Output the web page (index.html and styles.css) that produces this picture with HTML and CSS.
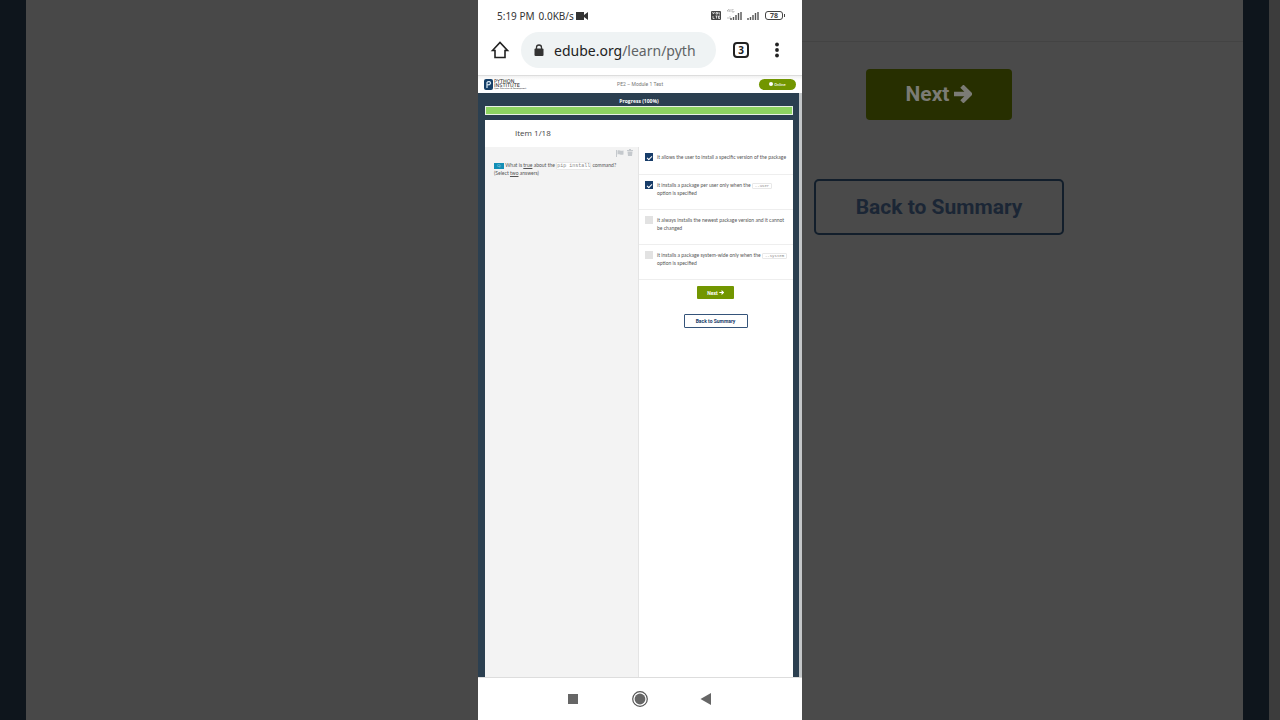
FILE: index.html
```
<!DOCTYPE html>
<html lang="en">
<head>
<meta charset="utf-8">
<title>PE2 – Module 1 Test</title>
<link rel="stylesheet" href="styles.css">
</head>
<body>
<div class="stage">
  <div class="side side-left" aria-hidden="true"></div>

  <main class="phone">
    <div class="status">
      <span>5:19 PM</span>
      <span class="speed">0.0KB/s</span>
      <svg class="cam" viewBox="0 0 12 8" width="12" height="8"><path fill="#333" d="M0 0h8v3l4-3v8l-4-3v3H0z"/></svg>
      <svg class="signals" viewBox="0 0 76 14" width="76" height="14">
        <rect x="0" y="2" width="10" height="9" rx="1" fill="#444"/>
        <path d="M1.500 3l1 2 1-2M5 3.500h1.500V5H5zM8 3v2h1M2 7v2.500h1.500M4.500 7h2M5.500 7v2.500M9 7H7.500v2.500H9M7.500 8H9" fill="none" stroke="#fff" stroke-width=".7"/>
        <path d="M18 0l-2 2h3M19 0v3M23 0h-2v3h2V2M17 8v2M19 7v3" fill="none" stroke="#999" stroke-width=".6"/>
        <path d="M20 9v2M22.500 8v3M25 6v5M27.500 4v7M30 3v8" stroke="#555" stroke-width="1.400"/>
        <path d="M37 9v2M39.500 8v3M42 6v5M44.500 4v7M47 3v8" stroke="#555" stroke-width="1.400"/>
        <rect x="54.500" y="2.500" width="17" height="8" rx="2.500" fill="none" stroke="#444"/>
        <path d="M73.500 5v3" stroke="#444"/>
        <text x="63" y="9" text-anchor="middle" class="battery">78</text>
      </svg>
    </div>

    <div class="browser">
      <button class="icon" aria-label="Home"><svg viewBox="0 0 20 20" width="20" height="20"><path d="M2.500 10.500L10 2.500l7.500 8H15V17.500H5v-7z" fill="none" stroke="#222" stroke-width="1.600"/></svg></button>
      <div class="url">
        <svg viewBox="0 0 10 12" width="10" height="12"><path d="M2.500 5V3.500a2.500 2.500 0 015 0V5" fill="none" stroke="#333" stroke-width="1.300"/><rect x=".5" y="4.500" width="9" height="7.500" rx="1" fill="#333"/></svg>
        <span>edube.org<span class="path">/learn/pyth</span></span>
      </div>
      <button class="tabs" aria-label="Open tabs">3</button>
      <button class="icon" aria-label="Menu"><svg viewBox="0 0 20 20" width="20" height="20" fill="#222"><circle cx="10" cy="4.500" r="1.900"/><circle cx="10" cy="10" r="1.900"/><circle cx="10" cy="15.500" r="1.900"/></svg></button>
    </div>

    <header class="site">
      <div class="brand">
        <svg viewBox="0 0 9 11" width="9" height="11"><rect width="9" height="11" rx="2" fill="#153f68"/><path d="M3 9V3.500C4 2 7 2.500 6.500 4.500 6 6 4.500 6 3 6" fill="none" stroke="#d8e8f4" stroke-width="1.200"/></svg>
        <div class="brand-text"><span>PYTHON</span><span>INSTITUTE</span><small>Open Education &amp; Development</small></div>
      </div>
      <span class="course">PE2 – Module 1 Test</span>
      <span class="online"><i class="dot"></i>Online</span>
    </header>

    <div class="page">
      <div class="progress-label" id="progress">Progress (100%)</div>
      <div class="progress" role="progressbar" aria-labelledby="progress" aria-valuenow="100"><div class="bar" style="width:100%"></div></div>
      <section class="card">
        <h1>Item 1/18</h1>
        <div class="columns">
          <div class="question">
            <div class="tools">
              <svg viewBox="0 0 8 8" width="8" height="8" fill="#c5c9cd"><path d="M0 1h1v7H0zM1.500 1.500C3 .5 4.500 2.500 7.500 1.500v4C4.500 6.500 3 4.500 1.500 5.500z"/></svg>
              <svg viewBox="0 0 8 8" width="8" height="8" fill="#c5c9cd"><path d="M1 1h2V0h2v1h2v1H1zM1.500 2.500h5L6 7H2z"/></svg>
            </div>
            <p><span class="q">Q:</span> What is <u>true</u> about the <code>pip install</code> command?<br>(Select <u>two</u> answers)</p>
          </div>
          <form class="answers">
            <label><input type="checkbox" checked><span>it allows the user to install a specific version of the package</span></label>
            <label class="tall"><input type="checkbox" checked><span>it installs a package per user only when the <code>--user</code><br>option is specified</span></label>
            <label class="tall"><input type="checkbox"><span>it always installs the newest package version and it cannot<br>be changed</span></label>
            <label class="tall"><input type="checkbox"><span>it installs a package system-wide only when the <code>--system</code><br>option is specified</span></label>
            <div class="actions">
              <button type="button" class="next">Next <svg viewBox="0 0 16 16" class="arrow"><path d="M1 8h12M8 2l6 6-6 6" fill="none" stroke="currentColor" stroke-width="3.500"/></svg></button>
              <button type="button" class="back">Back to Summary</button>
            </div>
          </form>
        </div>
      </section>
    </div>

    <nav class="system">
      <button aria-label="Recent apps"><svg viewBox="0 0 18 18" width="18" height="18"><path d="M4 4h10v10H4z" fill="#666"/></svg></button>
      <button aria-label="Home screen"><svg viewBox="0 0 18 18" width="18" height="18"><circle cx="9" cy="9" r="7.300" fill="none" stroke="#555" stroke-width="1.200"/><circle cx="9" cy="9" r="5.400" fill="#666"/></svg></button>
      <button aria-label="Back"><svg viewBox="0 0 18 18" width="18" height="18"><path d="M14 3v12L3.500 9z" fill="#666"/></svg></button>
    </nav>
  </main>

  <div class="side side-right" aria-hidden="true">
    <div class="enlarged">
      <button tabindex="-1" class="big-next">Next <svg viewBox="0 0 16 16" class="arrow"><path d="M0 8h13M7 1l7 7-7 7" fill="none" stroke="currentColor" stroke-width="4"/></svg></button>
      <button tabindex="-1" class="big-back">Back to Summary</button>
    </div>
  </div>
</div>
</body>
</html>
```
FILE: styles.css
```
* { box-sizing: border-box; }
body { margin: 0; font-family: "Open Sans", "Noto Sans", sans-serif; }
button { font: inherit; margin: 0; padding: 0; border: 0; background: none; }
svg { display: block; flex: none; }

.stage { display: grid; grid-template-columns: 1fr 324px 1fr; min-height: 100vh; background: #4a4a4a; }
.side-left { background: #484848; border-left: 26px solid #0e151c; }
.side-right { display: flex; border-right: 11px solid #3c3c3c; }
.enlarged { flex: 1; display: flex; flex-direction: column; align-items: flex-start; border-right: 26px solid #0e151c; font-family: Roboto, sans-serif; font-weight: 700; }
.enlarged::before { content: ""; align-self: stretch; height: 41px; border-bottom: 1px solid #434343; }
.big-next { display: flex; align-items: center; justify-content: center; gap: 5px; width: 146px; height: 51px; margin: 27px 0 0 64px; padding-bottom: 2px; border-radius: 4px; background: #272f00; color: #7b7b75; font-size: 21px; }
.big-next .arrow { width: 18px; }
.big-back { width: 250px; height: 56px; margin: 59px 0 0 12px; border: 2px solid #121e2b; border-radius: 5px; color: #1b2635; font-size: 21px; }

.phone { display: flex; flex-direction: column; min-height: 100vh; background: #fff; }
.status { display: flex; align-items: center; height: 31px; padding: 0 15px 0 19px; font: 10px "Noto Sans", sans-serif; color: #333; }
.speed { margin-left: 4px; }
.cam { margin-left: 2px; }
.signals { margin-left: auto; }
.battery { font: bold 7px "Noto Sans", sans-serif; fill: #444; }

.browser { display: flex; align-items: center; height: 45px; padding: 0 15px 6px 12px; border-bottom: 1px solid #ddd; }
.url { display: flex; flex: 1; align-items: center; gap: 10px; height: 36px; margin: 0 17px 0 11px; padding-left: 13px; border-radius: 18px; background: #eff3f4; color: #222; font: 14px "Noto Sans", sans-serif; white-space: nowrap; }
.path { color: #5f6366; }
.tabs { width: 16px; height: 16px; margin-right: 18px; border: 2px solid #222; border-radius: 4px; color: #222; font-size: 10px; font-weight: 700; line-height: 12px; }

.site { display: grid; grid-template-columns: 1fr auto 1fr; align-items: center; height: 17px; padding: 0 6px 1px; background: linear-gradient(#f1f1f1, #fff 4px); }
.brand { display: flex; gap: 1px; }
.brand-text { display: flex; flex-direction: column; color: #222; font-family: "DejaVu Sans", sans-serif; font-size: 5px; line-height: 4px; white-space: nowrap; }
.brand-text small { font-size: 2px; line-height: 3px; }
.course { color: #777; font: 5px Roboto, sans-serif; }
.online { display: flex; align-items: center; justify-content: center; gap: 1px; justify-self: end; width: 37px; height: 11px; border-radius: 6px; background: #729600; color: #f3f6e6; font: 500 4px Roboto, sans-serif; }
.dot { width: 4px; height: 4px; border-radius: 50%; background: #fff; }

.page { flex: 1; display: flex; flex-direction: column; padding: 4px 6px 0 7px; border-right: 3px solid #c4c7c9; background: #2b3f50; }
.progress-label { height: 9px; color: #fff; font-size: 5px; font-weight: 700; line-height: 9px; text-align: center; }
.progress { height: 9px; border: 1px solid #e9f2e5; }
.bar { height: 100%; background: #8dd461; }
.card { flex: 1; display: flex; flex-direction: column; margin-top: 5px; background: #fff; }
h1 { height: 27px; margin: 0; padding-left: 30px; color: #444; font-size: 8px; font-weight: 400; line-height: 26px; }
.columns { flex: 1; display: grid; grid-template-columns: 1fr 1fr; color: #555; font: 5px/8px Lato, "Open Sans", sans-serif; white-space: nowrap; }
.question { padding: 2px 4px 0 9px; border-right: 1px solid #e4e4e4; background: #f3f3f3; }
.tools { display: flex; justify-content: flex-end; gap: 2px; }
.question p { margin: 4px 0 0; }
.q { display: inline-block; width: 10px; height: 6px; background: #128eb5; color: #a9d6e5; font-size: 4px; line-height: 6px; text-align: center; vertical-align: middle; }
code { padding: 0 2px; border: 1px solid #e8e8e8; border-radius: 1px; background: #fff; color: #888; font-family: "Liberation Mono", monospace; font-size: 5px; line-height: 5px; }
.question code { padding: 0; }
.answers code { font-size: 4px; }
.answers label { display: flex; align-items: flex-start; gap: 4px; height: 28px; padding: 6px 0 0 6px; border-bottom: 1px solid #eee; }
.answers .tall { height: 35px; }
input { appearance: none; flex: none; width: 8px; height: 8px; margin: 0; background: #e2e2e2; }
input:checked { display: grid; place-items: center; background: #173c69; }
input:checked::before { content: ""; width: 4px; height: 2px; border: solid #fff; border-width: 0 0 1px 1px; transform: rotate(-45deg); }
.actions { display: flex; flex-direction: column; align-items: center; gap: 15px; padding: 6px 1px 0 0; font: 700 5px Roboto, sans-serif; }
.next { display: flex; align-items: center; justify-content: center; gap: 1px; width: 37px; height: 13px; border-radius: 1px; background: #729600; color: #fff; }
.next .arrow { width: 5px; }
.back { width: 64px; height: 14px; border: 1px solid #35547a; border-radius: 1px; color: #173c69; }

.system { display: flex; align-items: center; justify-content: space-between; height: 43px; padding: 0 87px 0 86px; border-top: 1px solid #ddd; }
```
